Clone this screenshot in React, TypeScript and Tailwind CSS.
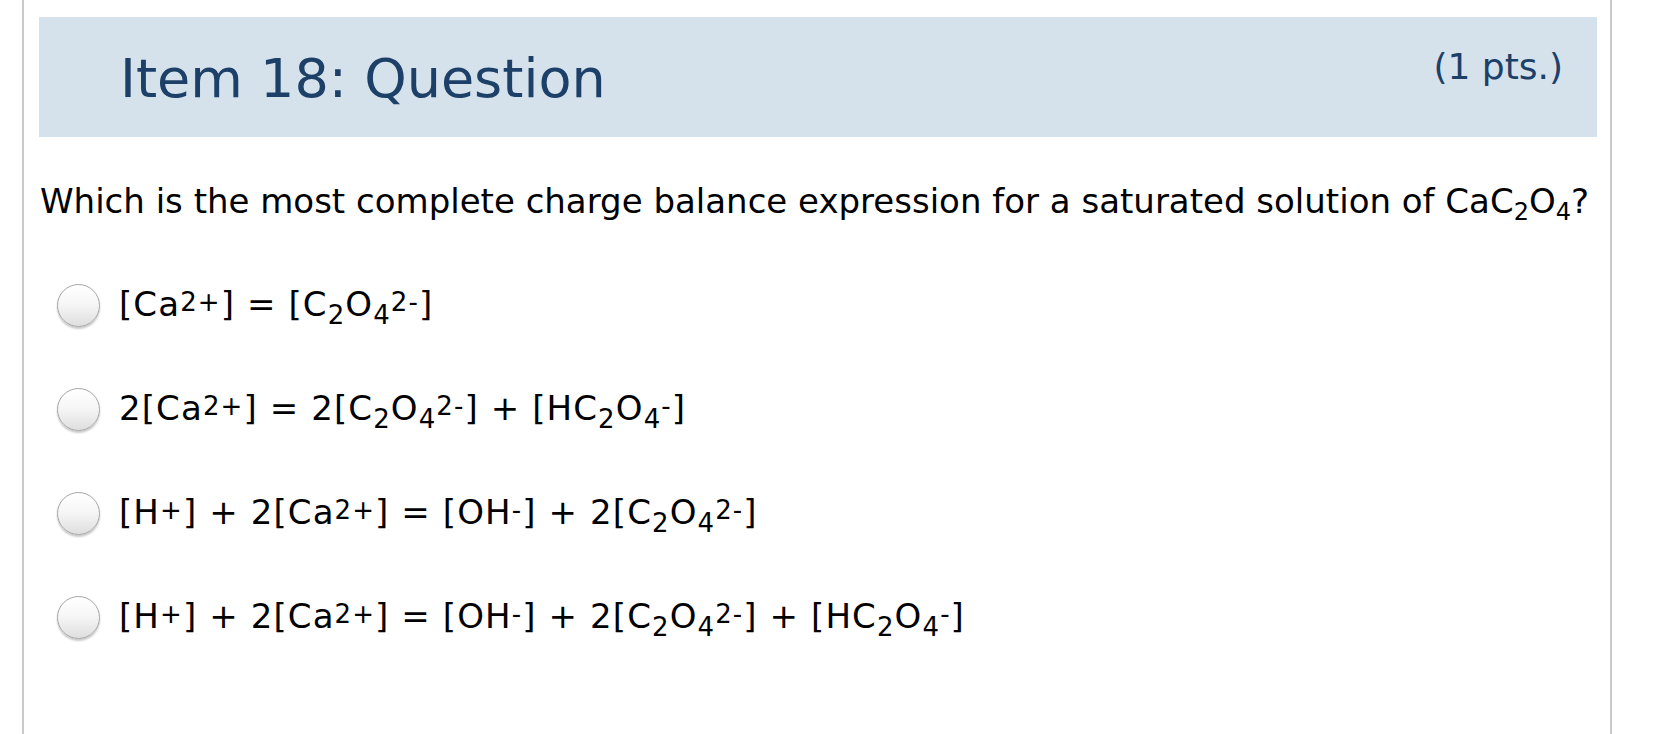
import React from 'react';

const Sub: React.FC<{ children: React.ReactNode }> = ({ children }) => (
  <span className="text-[26px] align-[-8px]">{children}</span>
);

const Sup: React.FC<{ children: React.ReactNode }> = ({ children }) => (
  <span className="text-[26px] align-[5px]">{children}</span>
);

const C2O4 = () => (
  <>
    C<Sub>2</Sub>O<Sub>4</Sub>
  </>
);

const options: React.ReactNode[] = [
  <>
    [Ca<Sup>2+</Sup>] = [<C2O4 /><Sup>2-</Sup>]
  </>,
  <>
    2[Ca<Sup>2+</Sup>] = 2[<C2O4 /><Sup>2-</Sup>] + [H<C2O4 /><Sup>-</Sup>]
  </>,
  <>
    [H<Sup>+</Sup>] + 2[Ca<Sup>2+</Sup>] = [OH<Sup>-</Sup>] + 2[<C2O4 /><Sup>2-</Sup>]
  </>,
  <>
    [H<Sup>+</Sup>] + 2[Ca<Sup>2+</Sup>] = [OH<Sup>-</Sup>] + 2[<C2O4 /><Sup>2-</Sup>] + [H<C2O4 /><Sup>-</Sup>]
  </>,
];

const Radio = () => (
  <div className="w-[43px] h-[43px] shrink-0 rounded-full border border-[#a6a6a6] bg-linear-to-b from-white via-[#f5f5f5] to-[#dedede] shadow-[0_2px_2px_rgba(0,0,0,0.22)]" />
);

export default function App() {
  return (
    <div className="w-[1672px] h-[734px] bg-white font-['DejaVu_Sans',sans-serif] text-black overflow-hidden">
      <div className="ml-[22px] w-[1590px] h-full border-l-2 border-r-2 border-[#c9c9c9] pl-[15px] pr-[13px] pt-[17px]">
        {/* Header */}
        <div className="h-[120px] bg-[#d5e2ec] flex justify-between items-start pl-[81px] pr-[34px] text-[#1d4068]">
          <div className="mt-[35px] text-[54px] leading-none">Item 18: Question</div>
          <div className="mt-[32px] text-[36px] leading-none">(1 pts.)</div>
        </div>

        {/* Question */}
        <div className="mt-[47px] h-[40px] pl-px text-[34px] leading-none whitespace-nowrap">
          Which is the most complete charge balance expression for a saturated solution of CaC
          <span className="text-[24px] align-[-7px]">2</span>O<span className="text-[24px] align-[-7px]">4</span>?
        </div>

        {/* Options */}
        <div className="mt-[29px] pl-[18px]">
          {options.map((opt, i) => (
            <div key={i} className="h-[104px] flex items-center gap-[19px]">
              <Radio />
              <div className="h-[37px] text-[34px] leading-none tracking-[1.1px] whitespace-nowrap">{opt}</div>
            </div>
          ))}
        </div>
      </div>
    </div>
  );
}
